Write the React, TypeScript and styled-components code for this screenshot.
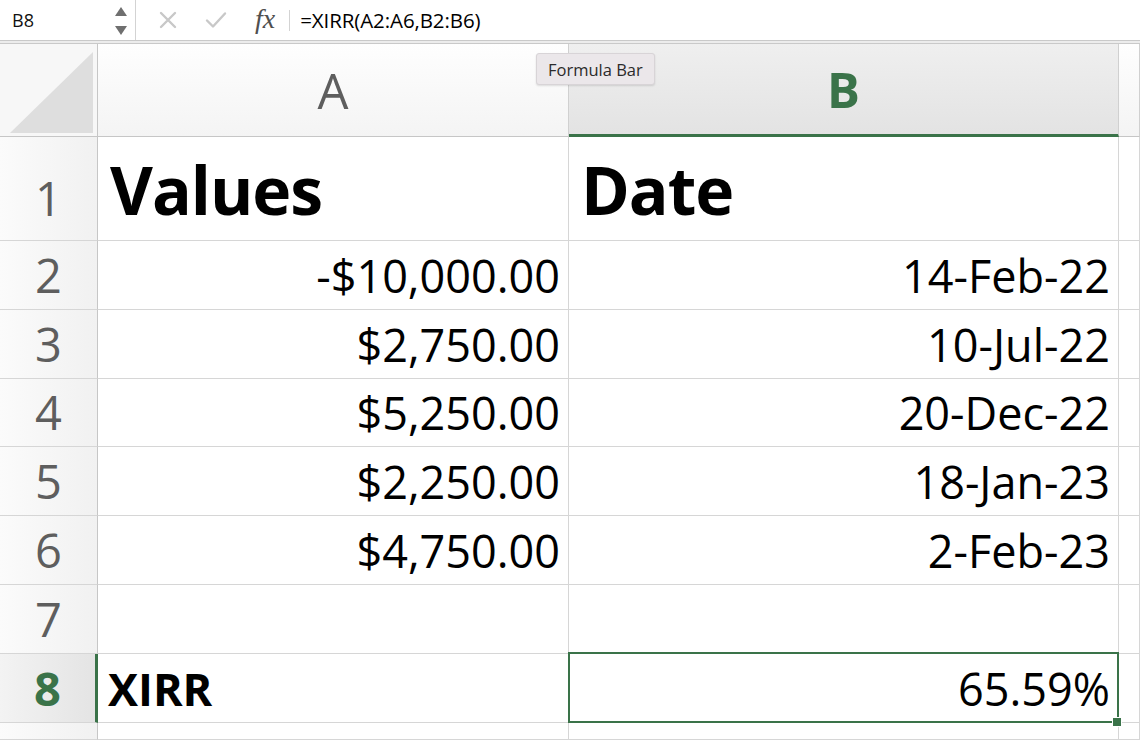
import styled, { createGlobalStyle } from "styled-components";

const GREEN = "#3a7349";
const GRID = "#d6d6d6";

type Row = {
  n: number;
  a: string;
  b: string;
  kind?: "title" | "result";
};

const rows: Row[] = [
  { n: 1, a: "Values", b: "Date", kind: "title" },
  { n: 2, a: "-$10,000.00", b: "14-Feb-22" },
  { n: 3, a: "$2,750.00", b: "10-Jul-22" },
  { n: 4, a: "$5,250.00", b: "20-Dec-22" },
  { n: 5, a: "$2,250.00", b: "18-Jan-23" },
  { n: 6, a: "$4,750.00", b: "2-Feb-23" },
  { n: 7, a: "", b: "" },
  { n: 8, a: "XIRR", b: "65.59%", kind: "result" },
];

function App(): JSX.Element {
  return (
    <Page>
      <GlobalStyle />
      <FormulaBar>
        <NameBox>
          <span>B8</span>
          <Stepper>
            <svg width="12" height="9" viewBox="0 0 12 9">
              <path d="M6 0 L12 9 L0 9 Z" fill="#6f6f6f" />
            </svg>
            <svg width="12" height="9" viewBox="0 0 12 9">
              <path d="M0 0 L12 0 L6 9 Z" fill="#6f6f6f" />
            </svg>
          </Stepper>
        </NameBox>
        <Actions>
          <svg width="18" height="18" viewBox="0 0 18 18">
            <path
              d="M2 2 L16 16 M16 2 L2 16"
              stroke="#c8c8c8"
              strokeWidth="2.4"
              strokeLinecap="round"
            />
          </svg>
          <svg width="22" height="18" viewBox="0 0 22 18">
            <path
              d="M2 9.5 L8 15.5 L20 2.5"
              stroke="#c8c8c8"
              strokeWidth="2.4"
              fill="none"
              strokeLinecap="round"
              strokeLinejoin="round"
            />
          </svg>
          <Fx>fx</Fx>
        </Actions>
        <Divider />
        <Formula>=XIRR(A2:A6,B2:B6)</Formula>
      </FormulaBar>
      <Band />
      <Sheet>
        <Corner>
          <svg width="98" height="93" viewBox="0 0 98 93">
            <path d="M10 89 L93 8 L93 89 Z" fill="#dedede" />
          </svg>
        </Corner>
        <ColHeader>A</ColHeader>
        <ColHeader $active>B</ColHeader>
        <ColHeader />

        {rows.map((r) => {
          const active = r.kind === "result";
          return [
            <RowHeader key={`h${r.n}`} $active={active} $tall={r.kind === "title"}>
              {r.n}
            </RowHeader>,
            <Cell
              key={`a${r.n}`}
              $align={r.kind ? "left" : "right"}
              $variant={r.kind}
            >
              {r.a}
            </Cell>,
            <Cell
              key={`b${r.n}`}
              $align={r.kind === "title" ? "left" : "right"}
              $variant={r.kind === "title" ? "title" : undefined}
              $selected={active}
            >
              {r.b}
              {active && <FillHandle />}
            </Cell>,
            <Cell key={`c${r.n}`} $align="left" />,
          ];
        })}

        <RowHeader />
        <Cell $align="left" />
        <Cell $align="left" />
        <Cell $align="left" />
      </Sheet>
      <Tooltip>Formula Bar</Tooltip>
    </Page>
  );
}

export default App;

const GlobalStyle = createGlobalStyle`
  html, body {
    margin: 0;
    padding: 0;
    background: #ffffff;
  }
  * {
    box-sizing: border-box;
  }
`;

const Page = styled.div`
  position: relative;
  width: 1140px;
  height: 740px;
  overflow: hidden;
  background: #ffffff;
  font-family: "Open Sans", "Liberation Sans", sans-serif;
`;

const FormulaBar = styled.div`
  display: flex;
  align-items: center;
  height: 40px;
  background: #ffffff;
`;

const NameBox = styled.div`
  display: flex;
  align-items: center;
  justify-content: space-between;
  width: 136px;
  height: 40px;
  padding: 0 8px 0 12px;
  border-right: 1px solid #d3d3d3;
  font-size: 18px;
  color: #111;
`;

const Stepper = styled.div`
  display: flex;
  flex-direction: column;
  gap: 10px;
  margin-top: 1px;
`;

const Actions = styled.div`
  display: flex;
  align-items: center;
  gap: 28px;
  margin-left: 23px;
`;

const Fx = styled.span`
  font-family: "Liberation Serif", "DejaVu Serif", serif;
  font-style: italic;
  font-size: 28px;
  color: #4f4f4f;
  line-height: 1;
  margin-top: -3px;
`;

const Divider = styled.div`
  width: 1px;
  height: 21px;
  margin: 0 10px 0 14px;
  background: #d3d3d3;
`;

const Formula = styled.span`
  font-size: 20.5px;
  color: #000;
  letter-spacing: -0.1px;
`;

const Band = styled.div`
  height: 4px;
  border-top: 1px solid #c9c9c9;
  border-bottom: 1px solid #c9c9c9;
  background: #ececec;
`;

const Sheet = styled.div`
  display: grid;
  grid-template-columns: 98px 471px 550px 1fr;
  grid-template-rows: 93px 104px 69px 69px 68px 69px 69px 69px 69px 1fr;
  height: 696px;
`;

const Corner = styled.div`
  background: #f7f7f7;
  border-right: 1px solid #c6c6c6;
  border-bottom: 1px solid #c6c6c6;
  svg {
    display: block;
  }
`;

const ColHeader = styled.div<{ $active?: boolean }>`
  display: flex;
  align-items: center;
  justify-content: center;
  font-size: 49px;
  line-height: 1;
  font-weight: ${(p) => (p.$active ? 700 : 400)};
  color: ${(p) => (p.$active ? GREEN : "#5e5e5e")};
  background: ${(p) =>
    p.$active
      ? "linear-gradient(to bottom, #efefef, #e3e3e3)"
      : "linear-gradient(to bottom, #fefefe, #f4f4f4)"};
  border-right: 1px solid #d0d0d0;
  border-bottom: ${(p) =>
    p.$active ? `3px solid ${GREEN}` : "1px solid #c6c6c6"};
`;

const RowHeader = styled.div<{ $active?: boolean; $tall?: boolean }>`
  display: flex;
  align-items: center;
  justify-content: center;
  padding-top: ${(p) => (p.$tall ? "20px" : "0")};
  font-size: 47px;
  line-height: 1;
  font-weight: ${(p) => (p.$active ? 700 : 400)};
  color: ${(p) => (p.$active ? GREEN : "#5e5e5e")};
  background: ${(p) =>
    p.$active
      ? "linear-gradient(to right, #f3f3f3, #e4e4e4)"
      : "linear-gradient(to right, #fbfbfb, #f1f1f1)"};
  border-bottom: 1px solid ${GRID};
  border-right: ${(p) => (p.$active ? `3px solid ${GREEN}` : "1px solid #c6c6c6")};
`;

const Cell = styled.div<{
  $align: "left" | "right";
  $variant?: "title" | "result";
  $selected?: boolean;
}>`
  position: relative;
  display: flex;
  align-items: center;
  justify-content: ${(p) => (p.$align === "right" ? "flex-end" : "flex-start")};
  padding: 0 8px 0 ${(p) => (p.$variant === "title" ? "12px" : "10px")};
  white-space: nowrap;
  font-size: ${(p) => (p.$variant === "title" ? "66px" : "45px")};
  font-weight: ${(p) => (p.$variant ? 700 : 400)};
  line-height: 1;
  color: #000;
  letter-spacing: ${(p) => (p.$variant === "title" ? "-1px" : "0")};
  border-right: 1px solid ${GRID};
  border-bottom: 1px solid ${GRID};

  ${(p) =>
    p.$selected &&
    `
    &::after {
      content: "";
      position: absolute;
      top: -2px;
      left: -1px;
      right: -1px;
      bottom: -1px;
      border: 2px solid ${GREEN};
      pointer-events: none;
    }
  `}
`;

const FillHandle = styled.span`
  position: absolute;
  right: -4px;
  bottom: -5px;
  width: 10px;
  height: 10px;
  background: ${GREEN};
  border: 1px solid #ffffff;
  z-index: 2;
`;

const Tooltip = styled.div`
  position: absolute;
  left: 536px;
  top: 53px;
  height: 32px;
  padding: 0 11px;
  display: flex;
  align-items: center;
  font-size: 16.5px;
  color: #2b2b2b;
  background: #ebe7ea;
  border: 1px solid #d8d4d7;
  border-radius: 3px;
  box-shadow: 0 1px 2px rgba(0, 0, 0, 0.12);
`;
